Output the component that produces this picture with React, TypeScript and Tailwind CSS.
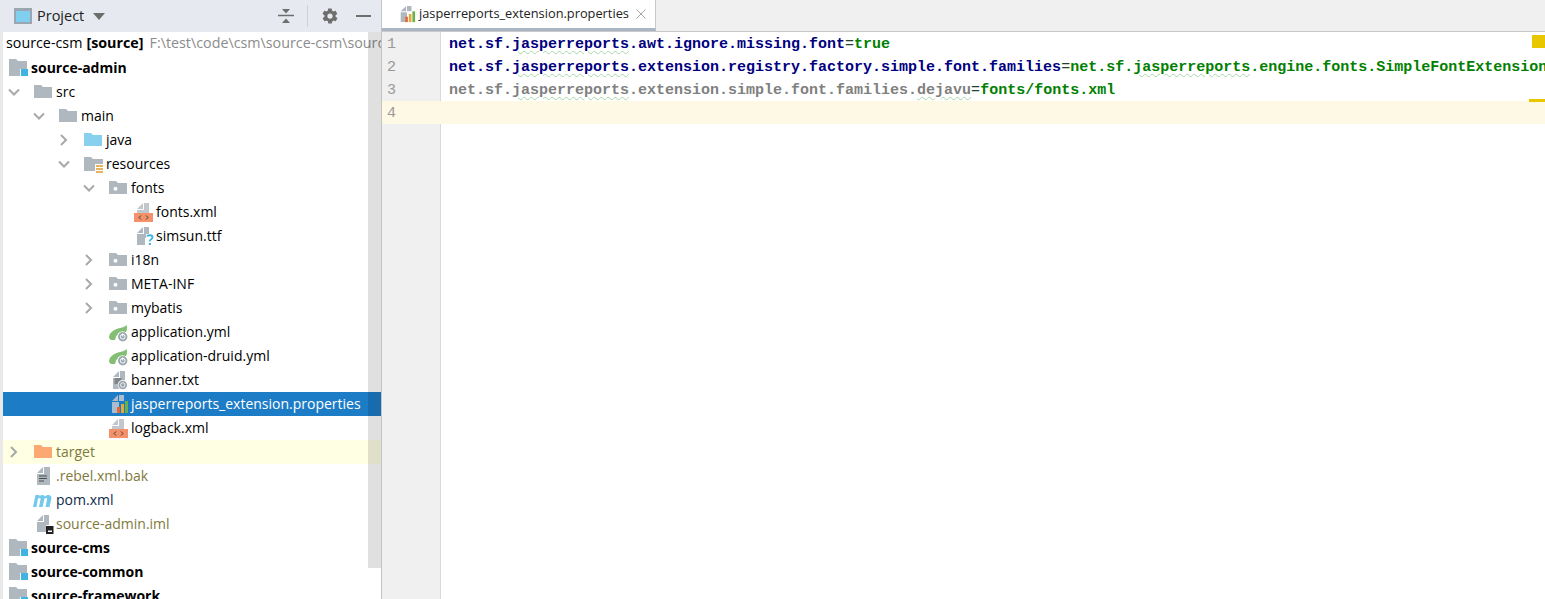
import React from "react";

const UI = "font-['Open_Sans','Noto_Sans',sans-serif]";

function Folder({ fill = "#AFB8BF", dot = false }: { fill?: string; dot?: boolean }) {
  return (
    <svg width="18" height="16" viewBox="0 0 18 16" className="block">
      <path d="M0 1h7l2 2h9v11H0z" fill={fill} />
      {dot && <circle cx="6.500" cy="8.700" r="2" fill="#fff" />}
    </svg>
  );
}
function Module() {
  return (
    <svg width="20" height="20" viewBox="0 0 20 20" className="block">
      <path d="M0 1h7l2 2h9v8h-7v7H0z" fill="#AFB8BF" />
      <rect x="12" y="11" width="7" height="7" fill="#3FB4E4" />
    </svg>
  );
}
function Res() {
  return (
    <svg width="20" height="20" viewBox="0 0 20 20" className="block">
      <path d="M0 3h7l2 2h10v5h-8v7H0z" fill="#AFB8BF" />
      <rect x="12" y="11" width="7" height="2" fill="#E5B45F" />
      <rect x="12" y="14" width="7" height="2" fill="#E5B45F" />
      <rect x="12" y="17" width="7" height="2" fill="#E5B45F" />
    </svg>
  );
}
function Xml() {
  return (
    <svg width="20" height="20" viewBox="0 0 20 20" className="block">
      <path d="M3 7l6-6v6z" fill="#C1C7CC" />
      <path d="M10 1h5v10H3V8h7z" fill="#C1C7CC" />
      <rect x="0" y="11" width="19" height="9" fill="#F2916A" />
      <path d="M7 13.500l-2 2 2 2M12 13.500l2 2-2 2" fill="none" stroke="#4b3a33" strokeWidth="1" />
    </svg>
  );
}
function Ttf() {
  return (
    <svg width="20" height="20" viewBox="0 0 20 20" className="block">
      <path d="M3 7l6-6v6z" fill="#AFB8BF" />
      <path d="M10 1h5v7h-3v4h-1v7H3V8h7z" fill="#AFB8BF" />
      <path d="M13 10.500c.6-1.800 5.500-1.800 5.500.8 0 2-2.800 2-2.800 4.200" fill="none" stroke="#3FB4E4" strokeWidth="1.800" />
      <rect x="14.800" y="17" width="2" height="2" fill="#3FB4E4" />
    </svg>
  );
}
function Spring() {
  return (
    <svg width="22" height="20" viewBox="0 0 22 20" className="block">
      <path d="M0 16C0 10 6 7 11 6c3-.5 5-1.500 6.500-3 1 3 .5 6-1 8H10L7 14.500 6 18H2z" fill="#82BF72" />
      <circle cx="13.700" cy="14.700" r="5.500" fill="#fff" />
      <circle cx="13.700" cy="14.700" r="4.700" fill="#9AA7B0" />
      <circle cx="13.700" cy="14.700" r="2.400" fill="none" stroke="#fff" strokeWidth="1" />
      <path d="M13.700 11.500v3" stroke="#fff" strokeWidth="1" />
    </svg>
  );
}
function Txt() {
  return (
    <svg width="20" height="20" viewBox="0 0 20 20" className="block">
      <path d="M4 7l6-6v6z" fill="#AFB8BF" />
      <path d="M11 1h5v12h-3v6H4V8h7z" fill="#AFB8BF" />
      <path d="M5.500 9h7M5.500 11h7M5.500 13h5" stroke="#555" strokeWidth="1" />
      <circle cx="13.700" cy="15" r="5" fill="#fff" />
      <circle cx="13.700" cy="15" r="4.300" fill="#9AA7B0" />
      <circle cx="13.700" cy="15" r="2.200" fill="none" stroke="#fff" strokeWidth=".8" />
    </svg>
  );
}
function Props({ size = 20, tone = "#AFB8BF" }: { size?: number; tone?: string }) {
  return (
    <svg width={size} height={size} viewBox="0 0 20 20" className="block">
      <path d="M3 7l6-6v6z" fill={tone} />
      <path d="M10 1h5v6h-5v12H3V8h7z" fill={tone} />
      <rect x="8" y="13" width="3" height="6" fill="#E8663C" />
      <rect x="12" y="10" width="3" height="9" fill="#E5A83C" />
      <rect x="16" y="7" width="3" height="12" fill="#6DB04A" />
    </svg>
  );
}
function Bak() {
  return (
    <svg width="20" height="20" viewBox="0 0 20 20" className="block">
      <path d="M3 7l6-6v6z" fill="#AFB8BF" />
      <path d="M10 1h6v18H3V8h7z" fill="#AFB8BF" />
      <path d="M5 10h8M5 12.500h8M5 15h5" stroke="#4a5055" strokeWidth="1" />
    </svg>
  );
}
function Maven() {
  return (
    <svg width="20" height="16" viewBox="0 0 20 16" className="block -ml-px">
      <path
        d="M0 15L2.500 3h4l-.2 1.500C8 2.500 11 2.500 11.800 4.500 13.500 2.500 18.500 2 18.500 6l-2 9h-4l1.700-8c.1-1.500-2.200-1.500-2.900 0L9.500 15H6l1.600-8c.1-1.500-2.100-1.500-2.800 0L3.500 15z"
        fill="#72C9EC"
      />
    </svg>
  );
}
function Iml() {
  return (
    <svg width="20" height="20" viewBox="0 0 20 20" className="block">
      <path d="M3 7l6-6v6z" fill="#AFB8BF" />
      <path d="M10 1h5v10h-3v7H3V8h7z" fill="#AFB8BF" />
      <rect x="12" y="12" width="7.500" height="8" fill="#222" />
      <rect x="14" y="16.500" width="4" height="1.500" fill="#fff" />
    </svg>
  );
}
function Chevron({ open, color = "#A8A8A8" }: { open: boolean; color?: string }) {
  return (
    <svg width="12" height="12" viewBox="0 0 12 12" className="block">
      <path d={open ? "M1 3.500l5 5 5-5" : "M3 1l5 5-5 5"} fill="none" stroke={color} strokeWidth="2" />
    </svg>
  );
}

type Row = {
  text: string;
  pad: string;
  icon: React.ReactNode;
  chevron?: "open" | "closed";
  cls?: string;
  row?: string;
};

const rows: Row[] = [
  { text: "source-admin", pad: "pl-[6px]", icon: <Module />, cls: "font-bold" },
  { text: "src", pad: "pl-[5px]", chevron: "open", icon: <Folder /> },
  { text: "main", pad: "pl-[30px]", chevron: "open", icon: <Folder /> },
  { text: "java", pad: "pl-[55px]", chevron: "closed", icon: <Folder fill="#87D1EE" /> },
  { text: "resources", pad: "pl-[55px]", chevron: "open", icon: <Res /> },
  { text: "fonts", pad: "pl-[80px]", chevron: "open", icon: <Folder dot /> },
  { text: "fonts.xml", pad: "pl-[131px]", icon: <Xml /> },
  { text: "simsun.ttf", pad: "pl-[131px]", icon: <Ttf /> },
  { text: "i18n", pad: "pl-[80px]", chevron: "closed", icon: <Folder dot /> },
  { text: "META-INF", pad: "pl-[80px]", chevron: "closed", icon: <Folder dot /> },
  { text: "mybatis", pad: "pl-[80px]", chevron: "closed", icon: <Folder dot /> },
  { text: "application.yml", pad: "pl-[106px]", icon: <Spring /> },
  { text: "application-druid.yml", pad: "pl-[106px]", icon: <Spring /> },
  { text: "banner.txt", pad: "pl-[106px]", icon: <Txt /> },
  { text: "jasperreports_extension.properties", pad: "pl-[106px]", icon: <Props tone="#A9BDCF" />, cls: "text-white", row: "bg-[#1C7CC6]" },
  { text: "logback.xml", pad: "pl-[106px]", icon: <Xml /> },
  { text: "target", pad: "pl-[5px]", chevron: "closed", icon: <Folder fill="#FBA873" />, cls: "text-[#7F7A3C]", row: "bg-[#FFFFE4]" },
  { text: ".rebel.xml.bak", pad: "pl-[31px]", icon: <Bak />, cls: "text-[#7F7A3C]" },
  { text: "pom.xml", pad: "pl-[31px]", icon: <Maven />, cls: "text-[#0E2A47]" },
  { text: "source-admin.iml", pad: "pl-[31px]", icon: <Iml />, cls: "text-[#7F7A3C]" },
  { text: "source-cms", pad: "pl-[6px]", icon: <Module />, cls: "font-bold" },
  { text: "source-common", pad: "pl-[6px]", icon: <Module />, cls: "font-bold" },
  { text: "source-framework", pad: "pl-[6px]", icon: <Module />, cls: "font-bold" },
];

function Wavy({ children }: { children: React.ReactNode }) {
  return <span className="underline decoration-wavy decoration-[#A9D6A9] decoration-1 underline-offset-2">{children}</span>;
}
function Eq() {
  return <span className="font-normal text-[#24402C]">=</span>;
}

export default function App() {
  return (
    <div className={`h-[599px] w-[1545px] overflow-hidden bg-white flex text-[14px] text-black ${UI}`}>
      <aside className="w-[382px] shrink-0 flex flex-col border-r border-[#C4C4C4] overflow-hidden">
        <header className="h-[32px] shrink-0 bg-[#E6E9F0] flex items-center pl-[14px] pr-[10px]">
          <svg width="18" height="16" viewBox="0 0 18 16" className="block">
            <rect x="1" y="1" width="16" height="14" fill="#80CFEE" stroke="#9AA7B0" strokeWidth="2" />
            <rect x="1" y="1" width="16" height="2" fill="#9AA7B0" />
          </svg>
          <span className="ml-[5px] text-[14.500px] text-[#222]">Project</span>
          <svg width="12" height="7" viewBox="0 0 12 7" className="block ml-[9px] mt-[1px]">
            <path d="M0 0h12L6 7z" fill="#6E6E6E" />
          </svg>
          <svg width="16" height="16" viewBox="0 0 16 16" className="block ml-auto">
            <path d="M0 7.500h16" stroke="#6E6E6E" strokeWidth="1.500" />
            <path d="M4 1h8L8 5.500zM4 15h8l-4-4.500z" fill="#6E6E6E" />
          </svg>
          <span className="w-px h-[22px] bg-[#CFD2D9] ml-[13px]" />
          <svg width="18" height="18" viewBox="0 0 24 24" className="block ml-[13px]">
            <path
              fill="#6E6E6E"
              d="M19.400 13c.1-.3.1-.7.1-1s0-.7-.1-1l2.100-1.600c.2-.2.300-.4.100-.7l-2-3.400c-.1-.2-.4-.3-.6-.2l-2.500 1a7 7 0 0 0-1.700-1l-.4-2.600c0-.3-.2-.5-.5-.5h-4c-.3 0-.5.200-.5.500l-.4 2.600c-.6.300-1.200.6-1.700 1l-2.500-1c-.2-.1-.5 0-.6.200l-2 3.400c-.1.300-.1.500.1.700L4.600 11c-.1.300-.1.700-.1 1s0 .7.1 1l-2.100 1.600c-.2.200-.3.400-.1.700l2 3.400c.1.200.4.300.6.200l2.500-1c.5.400 1.100.7 1.700 1l.4 2.600c0 .3.200.5.500.5h4c.3 0 .5-.2.500-.5l.4-2.600c.6-.3 1.200-.6 1.700-1l2.500 1c.2.100.5 0 .6-.2l2-3.400c.2-.3.100-.5-.1-.7zM12 15.500a3.500 3.500 0 1 1 0-7 3.500 3.500 0 0 1 0 7z"
            />
          </svg>
          <span className="w-[15px] h-[2px] bg-[#6E6E6E] ml-[17px]" />
        </header>
        <div className="flex-1 flex min-h-0">
          <div className="w-[3px] shrink-0 bg-[#E9E9E9]" />
          <div className="relative flex-1 min-w-0 overflow-hidden">
            <div className="h-[24px] flex items-center pl-[3px] whitespace-nowrap text-[14.300px]">
              <span className="mb-[2px]">source-csm</span>
              <span className="font-bold ml-[4px] mb-[2px]">[source]</span>
              <span className="text-[#8C8C8C] ml-[6px] mb-[2px]">F:\test\code\csm\source-csm\source</span>
            </div>
            {rows.map((r) => (
              <div key={r.text} className={`h-[24px] flex items-center whitespace-nowrap ${r.pad} ${r.row ?? ""}`}>
                {r.chevron && (
                  <span className="w-[26px] shrink-0">
                    <Chevron open={r.chevron === "open"} />
                  </span>
                )}
                <span className="w-[22px] shrink-0 flex items-center">{r.icon}</span>
                <span className={`mb-[2px] ${r.cls ?? ""}`}>{r.text}</span>
              </div>
            ))}
            <div className="absolute right-0 top-0 w-[13px] h-[536px] bg-black/[0.12]" />
          </div>
        </div>
      </aside>
      <main className="flex-1 min-w-0 flex flex-col relative">
        <div className="h-[32px] shrink-0 bg-[#F0F0F0] border-b border-[#C9C9C9] flex">
          <div className="w-[274px] h-[31px] bg-white border-r border-[#C9C9C9] border-b-[3px] border-b-[#A9B6C6] flex items-center pl-[16px]">
            <Props size={18} />
            <span className="ml-[3px] text-[12.800px] text-[#222]">jasperreports_extension.properties</span>
            <svg width="10" height="10" viewBox="0 0 10 10" className="block ml-[7px]">
              <path d="M.5.500l9 9M9.500.500l-9 9" stroke="#A6A6A6" strokeWidth="1" />
            </svg>
          </div>
        </div>
        <div className="flex-1 flex min-h-0">
          <div className="w-[59px] shrink-0 bg-[#F0F0F0] border-r border-[#D9D9D9] text-[#999] font-['Liberation_Mono',monospace] text-[15px] leading-[23px]">
            <div className="pl-[5px] pt-px h-[23px]">1</div>
            <div className="pl-[5px] pt-px h-[23px]">2</div>
            <div className="pl-[5px] pt-px h-[23px]">3</div>
            <div className="pl-[5px] pt-px h-[23px] bg-[#FEF9E5] -mr-px">4</div>
          </div>
          <div className="flex-1 min-w-0 overflow-hidden font-['Liberation_Mono',monospace] font-bold text-[15px] leading-[23px] whitespace-nowrap">
            <div className="pl-[8px] pt-px h-[23px] text-[#000080]">
              net.sf.<Wavy>jasperreports</Wavy>.awt.ignore.missing.font<Eq /><span className="text-[#008000]">true</span>
            </div>
            <div className="pl-[8px] pt-px h-[23px] text-[#000080]">
              net.sf.<Wavy>jasperreports</Wavy>.extension.registry.factory.simple.font.families<Eq />
              <span className="text-[#008000]">net.sf.<Wavy>jasperreports</Wavy>.engine.fonts.SimpleFontExtensionsRegistryFactory</span>
            </div>
            <div className="pl-[8px] pt-px h-[23px] text-[#808080]">
              net.sf.<Wavy>jasperreports</Wavy>.extension.simple.font.families.<Wavy>dejavu</Wavy><Eq />
              <span className="text-[#008000]">fonts/fonts.xml</span>
            </div>
            <div className="h-[23px] bg-[#FEF9E5]" />
          </div>
        </div>
        <div className="absolute right-0 top-[35px] w-[13px] h-[13px] bg-[#E8C600]" />
        <div className="absolute right-0 top-[99px] w-[16px] h-[3px] bg-[#E8C600]" />
      </main>
    </div>
  );
}
